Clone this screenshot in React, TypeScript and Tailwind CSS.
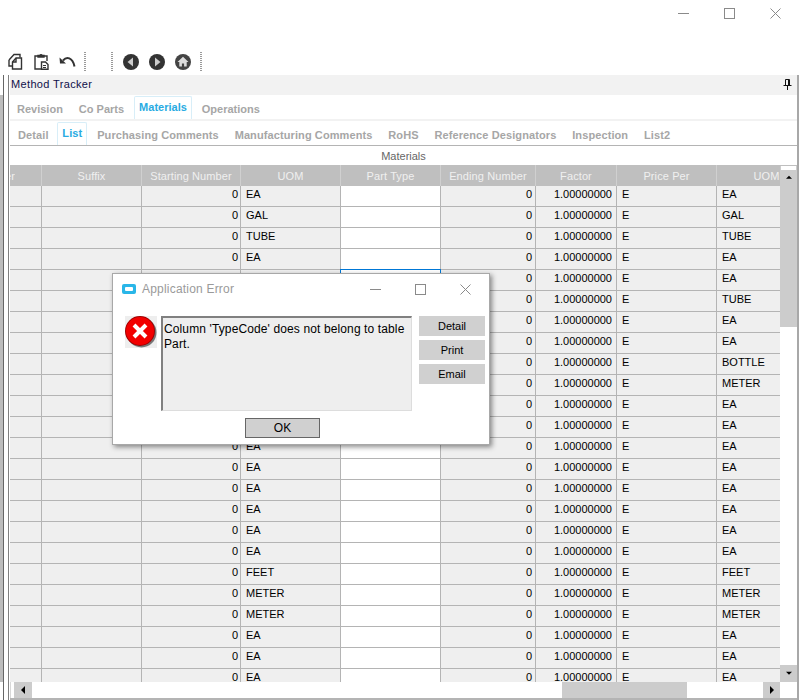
import React from 'react';

const uoms = ['EA','GAL','TUBE','EA','EA','TUBE','EA','EA','BOTTLE','METER','EA','EA','EA','EA','EA','EA','EA','EA','FEET','METER','METER','EA','EA','EA'];

const headers = ['er','Suffix','Starting Number','UOM','Part Type','Ending Number','Factor','Price Per','UOM'];
const gridCols = 'grid grid-cols-[32px_100px_99px_100px_100px_95px_81px_100px_100px] w-[807px]';

const mainTabs = ['Revision','Co Parts','Materials','Operations'];
const subTabs = ['Detail','List','Purchasing Comments','Manufacturing Comments','RoHS','Reference Designators','Inspection','List2'];

const WindowButtons = ({ gap }: { gap: string }) => (
  <div className={`flex items-center ${gap}`}>
    <svg width="11" height="11" viewBox="0 0 11 11"><path d="M0 5.500h11" stroke="#8a8a8a" /></svg>
    <svg width="11" height="11" viewBox="0 0 11 11"><rect x="0.500" y="0.500" width="10" height="10" fill="none" stroke="#8a8a8a" /></svg>
    <svg width="11" height="11" viewBox="0 0 11 11"><path d="M0.500 0.500l10 10M10.500 0.500l-10 10" stroke="#8a8a8a" /></svg>
  </div>
);

const Separator = ({ className }: { className: string }) => (
  <div className={`w-[2px] h-[19px] bg-[repeating-linear-gradient(to_bottom,#9a9a9a_0,#9a9a9a_1px,#ffffff_1px,#ffffff_2px)] ${className}`} />
);

const CopyIcon = () => (
  <svg width="15" height="17" viewBox="0 0 15 17" fill="none" stroke="#333" strokeWidth="1.4">
    <path d="M1 7l5-5.500h6v3" />
    <path d="M1 7v6l3 0" />
    <path d="M8 5h5.500v11H4.500V9z" fill="#fff" />
    <path d="M8 5v4H4.500" />
  </svg>
);

const PasteIcon = () => (
  <svg width="15" height="17" viewBox="0 0 15 17" fill="none" stroke="#333" strokeWidth="1.4">
    <path d="M4 3H1v13h6" />
    <path d="M10 3h3v5" />
    <path d="M4 4V2.500h1.800a1.300 1.300 0 0 1 2.400 0H10V4z" fill="#333" />
    <path d="M7.500 9h4l2.500 2.500v4.800H7.500z" fill="#fff" />
    <path d="M9 12.500h3M9 14.500h3" strokeWidth="1" />
  </svg>
);

const UndoIcon = () => (
  <svg width="17" height="13" viewBox="0 0 17 13" fill="none">
    <path d="M4 5.500C7.500 1.500 13.500 2 15.500 11.500" stroke="#333" strokeWidth="2" />
    <path d="M0.500 2.500l6.500 6H1z" fill="#333" />
  </svg>
);

const NavBack = () => (
  <svg width="16" height="16" viewBox="0 0 16 16">
    <circle cx="8" cy="8" r="8" fill="#333" />
    <path d="M10 3.500v9L4.500 8z" fill="#ccc" />
  </svg>
);

const NavForward = () => (
  <svg width="16" height="16" viewBox="0 0 16 16">
    <circle cx="8" cy="8" r="8" fill="#333" />
    <path d="M6 3.500v9L11.500 8z" fill="#ccc" />
  </svg>
);

const NavHome = () => (
  <svg width="16" height="16" viewBox="0 0 16 16">
    <circle cx="8" cy="8" r="8" fill="#444" />
    <path d="M8 2.800L2.500 8h1.800v4.500h2.600V9.500h2.200v3h2.600V8h1.800z" fill="#ddd" />
  </svg>
);

const PinIcon = () => (
  <svg width="9" height="11" viewBox="0 0 9 11" fill="none" stroke="#111">
    <path d="M0.500 6.500h8" />
    <path d="M2.500 6V0.500h4V6" />
    <path d="M5.500 1v5" />
    <path d="M4.500 7v4" />
  </svg>
);

const Arrow = ({ dir }: { dir: 'up' | 'down' | 'left' | 'right' }) => {
  const d = {
    up: 'M0 5l4-4 4 4z',
    down: 'M0 1h8L4 5z',
    left: 'M6 0v8L2 4z',
    right: 'M2 0v8l4-4z',
  }[dir];
  return (
    <svg width="8" height="8" viewBox="0 0 8 8" className={dir === 'up' || dir === 'down' ? 'h-[6px]' : ''}>
      <path d={d} fill="#000" />
    </svg>
  );
};

const ErrorIcon = () => (
  <div className="w-[32px] h-[32px] bg-[#eeeeee] shrink-0">
    <svg width="32" height="32" viewBox="0 0 32 32">
      <circle cx="16.500" cy="16.500" r="15" fill="#777" />
      <circle cx="15" cy="15" r="15" fill="#a00000" />
      <circle cx="15" cy="15" r="14" fill="#f20000" />
      <path d="M9 9l12 12M21 9L9 21" stroke="#fff" strokeWidth="4" />
    </svg>
  </div>
);

const AppIcon = () => (
  <div className="w-[14px] h-[10px] rounded-[2px] bg-[#29b6e8] flex items-center justify-center">
    <div className="w-[8px] h-[4px] rounded-[1px] bg-white" />
  </div>
);

const ErrorDialog = () => (
  <div className="absolute left-[112px] top-[273px] w-[378px] h-[172px] bg-white border border-[#a8a8a8] shadow-[2px_2px_5px_rgba(0,0,0,0.45)] flex flex-col">
    <div className="h-[30px] flex items-center pl-[9px] pr-[18px] shrink-0">
      <AppIcon />
      <span className="ml-[6px] text-[12px] text-[#9a9a9a] tracking-[0.2px]">Application Error</span>
      <div className="ml-auto">
        <WindowButtons gap="gap-[34px]" />
      </div>
    </div>
    <div className="flex pl-[12px] pt-[12px]">
      <ErrorIcon />
      <div className="ml-[4px] w-[251px] h-[95px] bg-[#eeeeee] border-t-2 border-l-2 border-t-[#808080] border-l-[#808080] border-r border-b border-r-[#dddddd] border-b-[#dddddd] text-[12px] leading-[15px] tracking-[0.12px] text-black pl-[1px] pt-[4px]">
        Column 'TypeCode' does not belong to table Part.
      </div>
      <div className="ml-[7px] flex flex-col gap-[4px]">
        {['Detail', 'Print', 'Email'].map((b) => (
          <div key={b} className="w-[66px] h-[20px] bg-[#d0d0d0] flex items-center justify-center text-[11px] text-black">
            {b}
          </div>
        ))}
      </div>
    </div>
    <div className="ml-[132px] mt-[7px] w-[75px] h-[20px] bg-[#d0d0d0] border border-[#666666] flex items-center justify-center text-[12px] text-black">
      OK
    </div>
  </div>
);

const GridRow = ({ uom, selected }: { uom: string; selected: boolean }) => {
  const cell = 'h-[21px] border-r border-b border-[#b4b4b4] text-[11px] leading-[17px] text-black overflow-hidden whitespace-nowrap';
  return (
    <div className={gridCols}>
      <div className={`${cell} bg-[#efefef]`} />
      <div className={`${cell} bg-[#efefef]`} />
      <div className={`${cell} bg-[#efefef] text-right pr-[2px]`}>0</div>
      <div className={`${cell} bg-[#efefef] pl-[5px]`}>{uom}</div>
      <div className={`${cell} bg-white relative overflow-visible`}>
        {selected && <div className="absolute -left-px -top-px -right-px bottom-0 border border-[#0078d7]" />}
      </div>
      <div className={`${cell} bg-[#efefef] text-right pr-[3px]`}>0</div>
      <div className={`${cell} bg-[#efefef] text-right pr-[4px]`}>1.00000000</div>
      <div className={`${cell} bg-[#efefef] pl-[5px]`}>E</div>
      <div className={`${cell} bg-[#efefef] pl-[5px]`}>{uom}</div>
    </div>
  );
};

const LeftStrip = () => (
  <div className="flex w-[10px] shrink-0">
    <div className="w-[3px] flex flex-col">
      <div className="h-[20px] bg-white" />
      <div className="h-[587px] bg-[#bdbdbd]" />
    </div>
    <div className="w-px bg-[#666666]" />
    <div className="w-[4px] bg-white" />
    <div className="w-px bg-[#808080]" />
    <div className="w-px bg-white" />
  </div>
);

export default function App() {
  return (
    <div className="relative w-[799px] h-[700px] bg-white overflow-hidden flex flex-col font-['Liberation_Sans',Arial,sans-serif]">
      {/* title bar */}
      <div className="h-[50px] shrink-0 flex justify-end pt-[8px] pr-[18px]">
        <div className="h-[11px]">
          <WindowButtons gap="gap-[35px]" />
        </div>
      </div>

      {/* toolbar */}
      <div className="h-[25px] shrink-0 flex items-center pl-[8px] pb-[2px]">
        <CopyIcon />
        <div className="ml-[11px]"><PasteIcon /></div>
        <div className="ml-[10px]"><UndoIcon /></div>
        <Separator className="ml-[8px]" />
        <Separator className="ml-[25px]" />
        <div className="ml-[10px]"><NavBack /></div>
        <div className="ml-[10px]"><NavForward /></div>
        <div className="ml-[10px]"><NavHome /></div>
        <Separator className="ml-[9px]" />
      </div>

      <div className="flex flex-1 min-h-0">
        <LeftStrip />
        <div className="flex-1 min-w-0 flex flex-col">
          {/* panel header */}
          <div className="h-[20px] shrink-0 bg-[#f2f2f2] flex items-center justify-between pl-[1px] pr-[5px] pb-[2px] text-[11px] text-[#10104a] tracking-[0.35px]">
            <span>Method Tracker</span>
            <PinIcon />
          </div>

          {/* main tabs */}
          <div className="h-[24px] shrink-0 flex items-end pl-[7px] gap-[16px] text-[11px] font-bold text-[#a6a6a6]">
            {mainTabs.map((t) =>
              t === 'Materials' ? (
                <div key={t} className="h-[23px] -mx-[6px] px-[4px] pt-[2px] border border-b-0 border-[#d8eef8] rounded-t-[2px] text-[#29abe2]">{t}</div>
              ) : (
                <div key={t} className="h-[23px] pt-[5px]">{t}</div>
              )
            )}
          </div>
          <div className="h-[2px] shrink-0 bg-[#f2f2f2]" />

          {/* sub tabs */}
          <div className="h-[24px] shrink-0 flex items-end pl-[8px] gap-[15.8px] text-[11px] font-bold text-[#a6a6a6] tracking-[0.1px]">
            {subTabs.map((t) =>
              t === 'List' ? (
                <div key={t} className="h-[23px] -ml-[7px] -mr-[6px] px-[4px] pt-[2px] border border-b-0 border-[#d8eef8] rounded-t-[2px] text-[#29abe2]">{t}</div>
              ) : (
                <div key={t} className="h-[23px] pt-[5px]">{t}</div>
              )
            )}
          </div>

          {/* caption */}
          <div className="h-[20px] shrink-0 border-t border-[#b4b4b4] flex items-center justify-center pt-[1px] text-[11px] text-[#666666]">
            Materials
          </div>

          {/* grid + scrollbars */}
          <div className="flex flex-1 min-h-0">
            <div className="w-[770px] shrink-0 overflow-hidden flex flex-col">
              <div className={`${gridCols} h-[21px] shrink-0`}>
                {headers.map((h, i) => (
                  <div
                    key={i}
                    className={`h-[21px] bg-[#bfbfbf] border-r border-[#d0d0d0] text-[11px] leading-[22px] text-[#f0f0f0] whitespace-nowrap overflow-hidden tracking-[0.1px] ${i === 0 ? '' : 'text-center'}`}
                  >
                    {i === 0 ? (
                      <div className="w-[5px] overflow-hidden flex justify-end">
                        <span className="shrink-0">{h}</span>
                      </div>
                    ) : (
                      h
                    )}
                  </div>
                ))}
              </div>
              <div className="flex-1 min-h-0 overflow-hidden">
                {uoms.map((u, i) => (
                  <GridRow key={i} uom={u} selected={i === 4} />
                ))}
              </div>
              {/* horizontal scrollbar */}
              <div className="h-[16px] shrink-0 flex bg-white">
                <div className="w-px bg-[#d8d8d8]" />
                <div className="w-[3px] bg-white" />
                <div className="w-[18px] bg-[#cccccc] flex items-center justify-center"><Arrow dir="left" /></div>
                <div className="w-[530px]" />
                <div className="w-[125px] bg-[#cccccc]" />
                <div className="w-[76px]" />
                <div className="w-[17px] bg-[#cccccc] flex items-center justify-center"><Arrow dir="right" /></div>
              </div>
              <div className="h-[2px] shrink-0 bg-[#b4b4b4]" />
            </div>

            {/* vertical scrollbar */}
            <div className="w-[17px] shrink-0 flex flex-col">
              <div className="h-[162px] shrink-0 bg-[#cccccc] flex flex-col">
                <div className="h-[1px] bg-[#bfbfbf]" />
                <div className="h-[4px] mx-px bg-white" />
                <div className="h-[16px] flex items-center justify-center"><Arrow dir="up" /></div>
              </div>
              <div className="h-[338px] shrink-0 bg-white" />
              <div className="h-[17px] shrink-0 bg-[#cccccc] flex items-center justify-center"><Arrow dir="down" /></div>
              <div className="flex-1" />
              <div className="h-[2px] shrink-0 bg-[#b4b4b4]" />
            </div>
          </div>
        </div>
        <div className="w-[2px] shrink-0 bg-[#a8a8a8]" />
      </div>

      <ErrorDialog />
    </div>
  );
}
